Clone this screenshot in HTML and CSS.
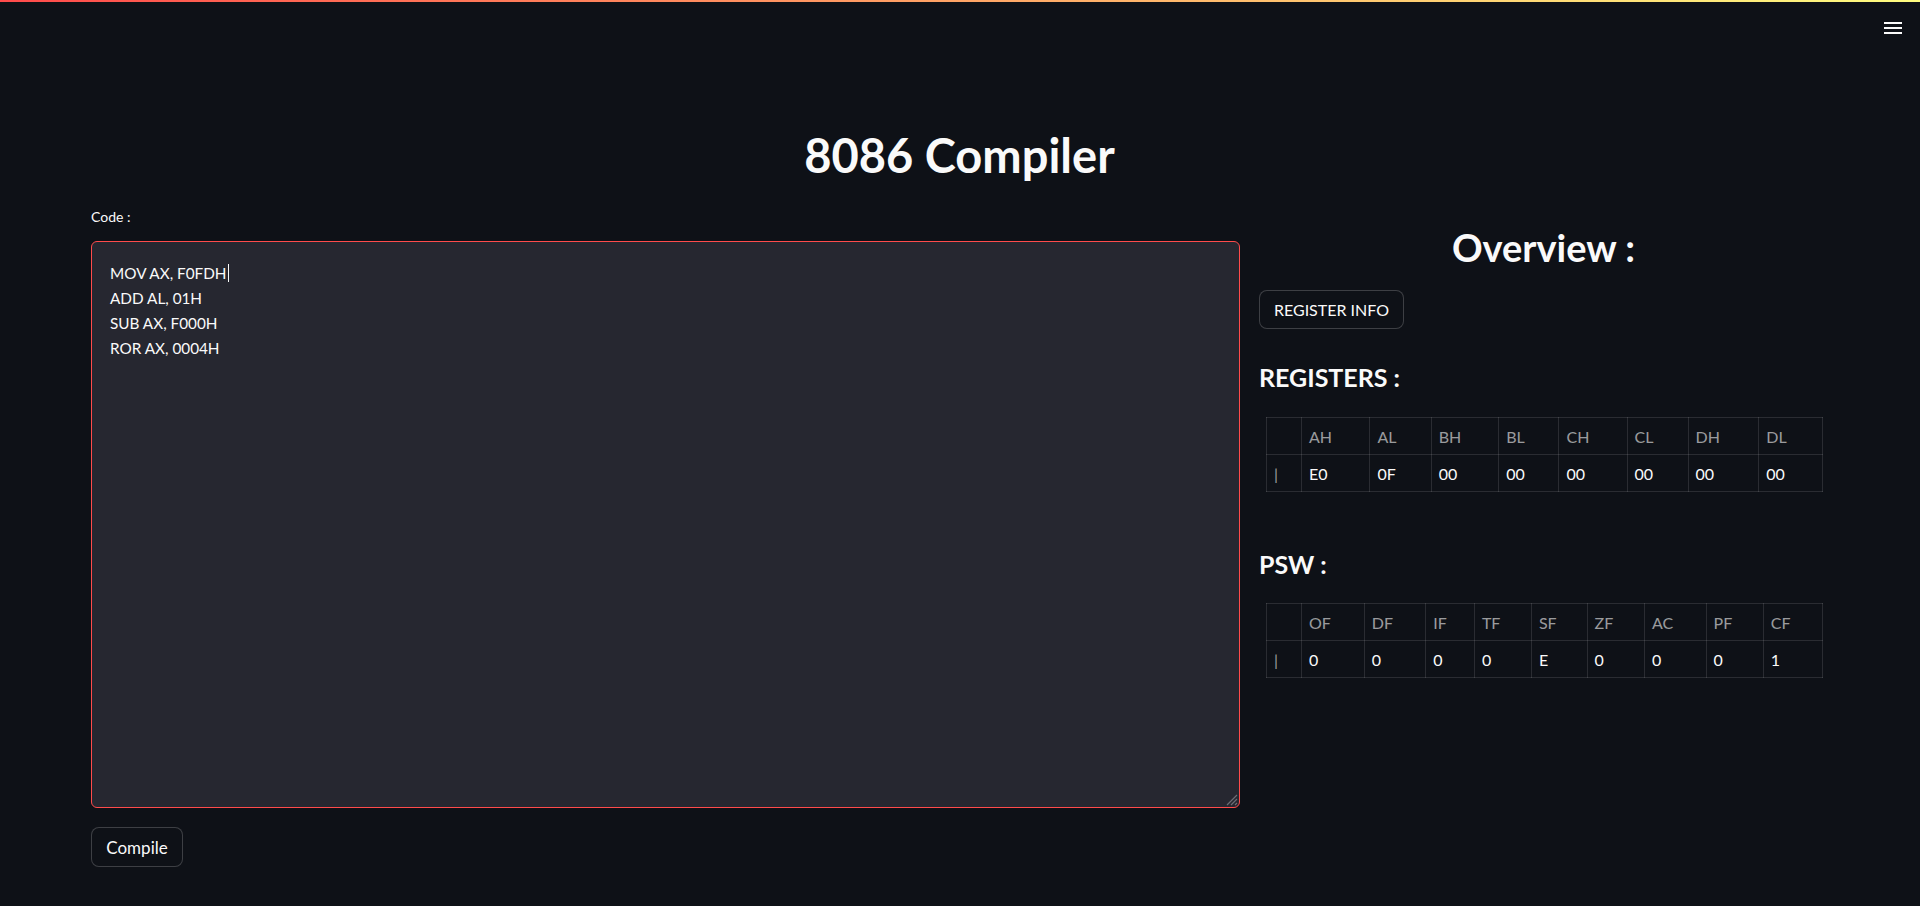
FILE: index.html
```html
<!DOCTYPE html>
<html lang="en">
<head>
  <meta charset="UTF-8">
  <title>8086 Compiler</title>
  <link rel="stylesheet" href="styles.css">
</head>
<body>
  <div class="decoration"></div>
  <div class="menu-button">
    <svg width="18" height="14" viewBox="0 0 18 14"><rect x="0" y="1" width="18" height="2" fill="#fafafa"/><rect x="0" y="6" width="18" height="2" fill="#fafafa"/><rect x="0" y="11" width="18" height="2" fill="#fafafa"/></svg>
  </div>

  <div class="main">
    <h1 class="page-title">8086 Compiler</h1>

    <div class="columns">
      <div class="col-left">
        <div class="label">Code :</div>
        <div class="code-area">
          <div class="code-line">MOV AX, F0FDH<span class="caret"></span></div>
          <div class="code-line">ADD AL, 01H</div>
          <div class="code-line">SUB AX, F000H</div>
          <div class="code-line">ROR AX, 0004H</div>
          <svg class="grip" width="14" height="14" viewBox="0 0 14 14">
            <path d="M13 3 L3 13 M13 7 L7 13 M13 11 L11 13" stroke="#6b6d74" stroke-width="1.2"/>
          </svg>
        </div>
        <button class="btn btn-compile">Compile</button>
      </div>

      <div class="col-right">
        <h2 class="overview">Overview :</h2>
        <button class="btn btn-info">REGISTER INFO</button>

        <h3 class="section-title">REGISTERS :</h3>
        <table class="reg-table">
          <thead>
            <tr><th class="idx"></th><th>AH</th><th>AL</th><th>BH</th><th>BL</th><th>CH</th><th>CL</th><th>DH</th><th>DL</th></tr>
          </thead>
          <tbody>
            <tr><td class="idx">|</td><td>E0</td><td>0F</td><td>00</td><td>00</td><td>00</td><td>00</td><td>00</td><td>00</td></tr>
          </tbody>
        </table>

        <h3 class="section-title psw-title">PSW :</h3>
        <table class="reg-table">
          <thead>
            <tr><th class="idx"></th><th>OF</th><th>DF</th><th>IF</th><th>TF</th><th>SF</th><th>ZF</th><th>AC</th><th>PF</th><th>CF</th></tr>
          </thead>
          <tbody>
            <tr><td class="idx">|</td><td>0</td><td>0</td><td>0</td><td>0</td><td>E</td><td>0</td><td>0</td><td>0</td><td>1</td></tr>
          </tbody>
        </table>
      </div>
    </div>
  </div>
</body>
</html>
```

FILE: styles.css
```css
    body {
      font-family: "Source Sans Pro", Lato, sans-serif;
      background: #0e1117;
      color: #fafafa;
      margin: 0;
      min-height: 906px;
    }

    .decoration {
      position: fixed;
      top: 0;
      left: 0;
      right: 0;
      height: 2px;
      background-image: linear-gradient(90deg, #ff4b4b, #fffd80);
    }

    .menu-button {
      position: absolute;
      top: 21px;
      right: 18px;
      line-height: 0;
    }

    .main {
      padding: 128px 92px 0 91px;
    }

    .page-title {
      font-size: 47px;
      line-height: 54px;
      font-weight: 700;
      text-align: center;
      margin: 0 0 25px 0;
    }

    .columns {
      display: grid;
      grid-template-columns: 1149px 1fr;
      column-gap: 19px;
    }

    .label {
      font-size: 14px;
      line-height: 20px;
      margin-bottom: 14px;
    }

    .code-area {
      position: relative;
      height: 567px;
      box-sizing: border-box;
      background: #262730;
      border: 1px solid #ff4b4b;
      border-radius: 6px;
      padding: 19px 18px;
      font-size: 15.3px;
      line-height: 25px;
    }

    .caret {
      display: inline-block;
      width: 1px;
      height: 18px;
      background: #fafafa;
      vertical-align: -3px;
      margin-left: 1px;
    }

    .grip {
      position: absolute;
      right: 1px;
      bottom: 1px;
    }

    .btn {
      font-family: inherit;
      font-size: 16px;
      color: #fafafa;
      background: #0e1117;
      border: 1px solid rgba(250, 250, 250, 0.2);
      border-radius: 8px;
      padding: 0 12px;
      cursor: pointer;
    }

    .btn-compile {
      margin-top: 19px;
      height: 40px;
      width: 92px;
      font-size: 17px;
    }

    .col-right {
      padding-top: 17px;
    }

    .overview {
      font-size: 38px;
      line-height: 46px;
      font-weight: 700;
      text-align: center;
      margin: 0 0 20px 0;
    }

    .btn-info {
      height: 39px;
      width: 145px;
    }

    .section-title {
      font-size: 25px;
      line-height: 32px;
      font-weight: 700;
      margin: 32px 0 24px 0;
    }

    .psw-title {
      margin-top: 56px;
      margin-bottom: 23px;
    }

    .reg-table {
      width: 557px;
      margin-left: 7px;
      border-collapse: collapse;
      font-size: 16px;
    }

    .reg-table th,
    .reg-table td {
      height: 36px;
      padding: 0 7px;
      border: 1px solid rgba(250, 250, 250, 0.12);
      text-align: left;
      font-weight: 400;
    }

    .reg-table th {
      color: rgba(250, 250, 250, 0.6);
    }

    .reg-table .idx {
      width: 20px;
      color: rgba(250, 250, 250, 0.6);
    }
```
